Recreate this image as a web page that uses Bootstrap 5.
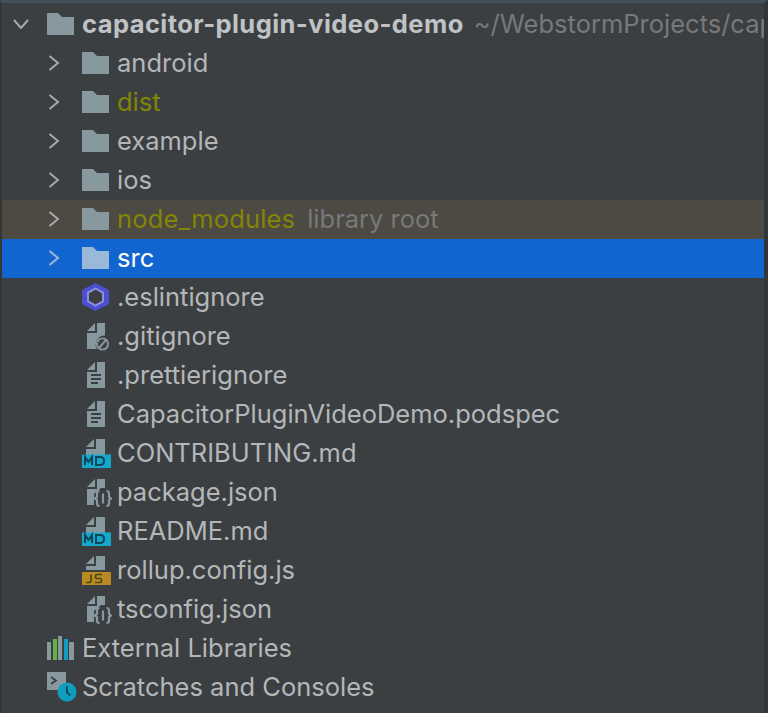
<!DOCTYPE html>
<html lang="en">
<head>
  <meta charset="UTF-8" />
  <title>Project tree</title>
  <link href="https://cdn.jsdelivr.net/npm/bootstrap@5.3.2/dist/css/bootstrap.min.css" rel="stylesheet" />
  <style>
    html, body { height: 100%; }
    body {
      background: #3c3f41;
      font-family: Inter, "Liberation Sans", sans-serif;
      font-size: 25.5px;
      color: #b4b7b9;
      overflow: hidden;
    }
    .pane {
      height: 713px;
      width: 768px;
      overflow: hidden;
      border-top: 3px solid #3f505e;
      border-left: 2px solid #333638;
      border-right: 4px solid #333638;
      padding-top: 1.5px;
    }
    .tree-row {
      height: 39px;
      white-space: nowrap;
      flex-shrink: 0;
    }
    .tree-row svg { display: block; flex-shrink: 0; }
    .arrow-slot { width: 34px; margin-left: 11px; flex-shrink: 0; }
    .depth-1 .arrow-slot { width: 34px; margin-left: 46px; }
    .icon-slot { width: 35px; flex-shrink: 0; }
    .leaf { padding-left: 80px; }
    .ext-row { padding-left: 45px; }
    .root-name { font-weight: 700; color: #c0c3c5; letter-spacing: .43px; flex-shrink: 0; }
    .hint { color: #77797b; margin-left: 12px; }
    .root-hint { margin-left: 10px; }
    .vcs-ignored { color: #848504; }
    .modules-name { letter-spacing: .17px; }
    .lib-row { background: #4c4a42; }
    .sel-row { background: #1265cf; color: #fff; }
  </style>
</head>
<body>
  <svg width="0" height="0" class="position-absolute">
    <defs>
      <symbol id="fold" viewBox="0 0 27 22"><path d="M0 0h11l4 4h12v18H0z"/></symbol>
      <symbol id="chev-r" viewBox="0 0 12 16"><path d="M1.500 1l8.500 7-8.500 7" fill="none" stroke="currentColor" stroke-width="1.900"/></symbol>
      <symbol id="chev-d" viewBox="0 0 16 10"><path d="M1 1l7 8 7-8" fill="none" stroke="currentColor" stroke-width="1.900"/></symbol>
      <symbol id="doc" viewBox="0 0 20 28">
        <path d="M1 9l8-8v8z" fill="#87989f"/>
        <path d="M11 1h8v26H1V11h10z" fill="#87989f"/>
        <path d="M5 14h10M5 18h10M5 22h7" stroke="#3c3f41" stroke-width="1.800" fill="none"/>
      </symbol>
      <symbol id="md-file" viewBox="0 0 30 29">
        <path d="M4 8l8-8v8z" fill="#87989f"/>
        <path d="M14 0h9v16H4v-6h10z" fill="#87989f"/>
        <path d="M0 15.500h29V29H0z" fill="#14a8cb"/>
        <path d="M3 26v-8l3.500 5 3.500-5v8M14 18v8h4q4 0 4-4t-4-4z" fill="none" stroke="#10465a" stroke-width="2"/>
      </symbol>
      <symbol id="js-file" viewBox="0 0 30 29">
        <path d="M4 8l8-8v8z" fill="#87989f"/>
        <path d="M14 0h9v14H4v-4h10z" fill="#87989f"/>
        <path d="M0 16h29v13H0z" fill="#b98a24"/>
        <path d="M9 18.500v6q0 2-2 2H4M20 18.500h-5q-1.500 0-1.500 2t1.500 2h3q1.500 0 1.500 2t-1.500 2h-5" fill="none" stroke="#4f4a12" stroke-width="1.700"/>
      </symbol>
      <symbol id="json-file" viewBox="0 0 26 30">
        <path d="M1 10l8-8v8z" fill="#87989f"/>
        <path d="M11 2h8v9h-4l-7 6v11H1V12h10z" fill="#87989f"/>
        <path d="M13.500 14q-2.500 0-2.500 2.500v3.500l-2 1.500 2 1.500v3.500q0 2.500 2.500 2.500M20.500 14q2.500 0 2.500 2.500v3.500l2 1.500-2 1.500v3.500q0 2.500-2.500 2.500M17 16.500v10" fill="none" stroke="#87989f" stroke-width="2.200"/>
      </symbol>
    </defs>
  </svg>

  <div class="pane d-flex flex-column">
    <div class="tree-row d-flex align-items-center">
      <span class="arrow-slot"><svg width="16" height="10" color="#a9acae"><use href="#chev-d"/></svg></span>
      <span class="icon-slot"><svg width="27" height="22" fill="#87989f"><use href="#fold"/></svg></span>
      <span class="root-name">capacitor-plugin-video-demo</span><span class="hint root-hint">~/WebstormProjects/cap</span>
    </div>

    <div class="tree-row depth-1 d-flex align-items-center">
      <span class="arrow-slot"><svg width="12" height="16" color="#a9acae"><use href="#chev-r"/></svg></span>
      <span class="icon-slot"><svg width="27" height="22" fill="#87989f"><use href="#fold"/></svg></span>
      <span>android</span>
    </div>
    <div class="tree-row depth-1 d-flex align-items-center">
      <span class="arrow-slot"><svg width="12" height="16" color="#a9acae"><use href="#chev-r"/></svg></span>
      <span class="icon-slot"><svg width="27" height="22" fill="#87989f"><use href="#fold"/></svg></span>
      <span class="vcs-ignored">dist</span>
    </div>
    <div class="tree-row depth-1 d-flex align-items-center">
      <span class="arrow-slot"><svg width="12" height="16" color="#a9acae"><use href="#chev-r"/></svg></span>
      <span class="icon-slot"><svg width="27" height="22" fill="#87989f"><use href="#fold"/></svg></span>
      <span>example</span>
    </div>
    <div class="tree-row depth-1 d-flex align-items-center">
      <span class="arrow-slot"><svg width="12" height="16" color="#a9acae"><use href="#chev-r"/></svg></span>
      <span class="icon-slot"><svg width="27" height="22" fill="#87989f"><use href="#fold"/></svg></span>
      <span>ios</span>
    </div>
    <div class="tree-row depth-1 lib-row d-flex align-items-center">
      <span class="arrow-slot"><svg width="12" height="16" color="#a9acae"><use href="#chev-r"/></svg></span>
      <span class="icon-slot"><svg width="27" height="22" fill="#87989f"><use href="#fold"/></svg></span>
      <span class="vcs-ignored modules-name">node_modules</span><span class="hint">library root</span>
    </div>
    <div class="tree-row depth-1 sel-row d-flex align-items-center">
      <span class="arrow-slot"><svg width="12" height="16" color="#a3b8d8"><use href="#chev-r"/></svg></span>
      <span class="icon-slot"><svg width="27" height="22" fill="#9ab8d8"><use href="#fold"/></svg></span>
      <span>src</span>
    </div>

    <div class="tree-row leaf d-flex align-items-center">
      <span class="icon-slot"><svg width="27" height="28" viewBox="0 0 27 28"><path fill-rule="evenodd" d="M13.500 0L27 7v14l-13.500 7L0 21V7zM13.500 6.500L7 10.200v7.600l6.500 3.700 6.500-3.700v-7.600z" fill="#4b4fd0"/><path d="M13.500 5.500L21 9.700v8.600l-7.500 4.200L6 18.300V9.700z" fill="none" stroke="#8c8fe0" stroke-width="2"/></svg></span>
      <span>.eslintignore</span>
    </div>
    <div class="tree-row leaf d-flex align-items-center">
      <span class="icon-slot"><svg width="26" height="30" viewBox="0 0 26 30" class="ms-1"><path d="M1 10l8-8v8z" fill="#87989f"/><path d="M11 2h8v12.500a9 9 0 0 0-8 13.500H1V12h10z" fill="#87989f"/><circle cx="16.500" cy="23" r="5.600" fill="none" stroke="#87989f" stroke-width="1.900"/><path d="M13 27l7-8" stroke="#87989f" stroke-width="1.900"/></svg></span>
      <span>.gitignore</span>
    </div>
    <div class="tree-row leaf d-flex align-items-center">
      <span class="icon-slot"><svg width="20" height="28" class="ms-1"><use href="#doc"/></svg></span>
      <span>.prettierignore</span>
    </div>
    <div class="tree-row leaf d-flex align-items-center">
      <span class="icon-slot"><svg width="20" height="28" class="ms-1"><use href="#doc"/></svg></span>
      <span>CapacitorPluginVideoDemo.podspec</span>
    </div>
    <div class="tree-row leaf d-flex align-items-center">
      <span class="icon-slot"><svg width="30" height="29"><use href="#md-file"/></svg></span>
      <span>CONTRIBUTING.md</span>
    </div>
    <div class="tree-row leaf d-flex align-items-center">
      <span class="icon-slot"><svg width="26" height="30" class="ms-1"><use href="#json-file"/></svg></span>
      <span>package.json</span>
    </div>
    <div class="tree-row leaf d-flex align-items-center">
      <span class="icon-slot"><svg width="30" height="29"><use href="#md-file"/></svg></span>
      <span>README.md</span>
    </div>
    <div class="tree-row leaf d-flex align-items-center">
      <span class="icon-slot"><svg width="30" height="29"><use href="#js-file"/></svg></span>
      <span>rollup.config.js</span>
    </div>
    <div class="tree-row leaf d-flex align-items-center">
      <span class="icon-slot"><svg width="26" height="30" class="ms-1"><use href="#json-file"/></svg></span>
      <span>tsconfig.json</span>
    </div>

    <div class="tree-row ext-row d-flex align-items-center">
      <span class="icon-slot"><svg width="28" height="24" viewBox="0 0 28 24"><path d="M0 6h4v18H0zM11 0h4v24h-4zM22 6h5v18h-5z" fill="#87989f"/><path d="M6 3h4v21H6z" fill="#62b543"/><path d="M17 3h4v21h-4z" fill="#0f9ec0"/></svg></span>
      <span>External Libraries</span>
    </div>
    <div class="tree-row ext-row d-flex align-items-center">
      <span class="icon-slot"><svg width="30" height="30" viewBox="0 0 30 30"><path d="M0 0h19v11a9 9 0 0 0-7 7H0z" fill="#87989f"/><path d="M4 5l5 3.500-5 3.500" fill="none" stroke="#3c3f41" stroke-width="1.800"/><circle cx="20" cy="20" r="9.500" fill="#0f9ec0"/><path d="M20 14v6.500l3.500 3" fill="none" stroke="#16465a" stroke-width="1.800"/></svg></span>
      <span>Scratches and Consoles</span>
    </div>
  </div>
  <script src="https://cdn.jsdelivr.net/npm/bootstrap@5.3.2/dist/js/bootstrap.bundle.min.js"></script>
</body>
</html>
